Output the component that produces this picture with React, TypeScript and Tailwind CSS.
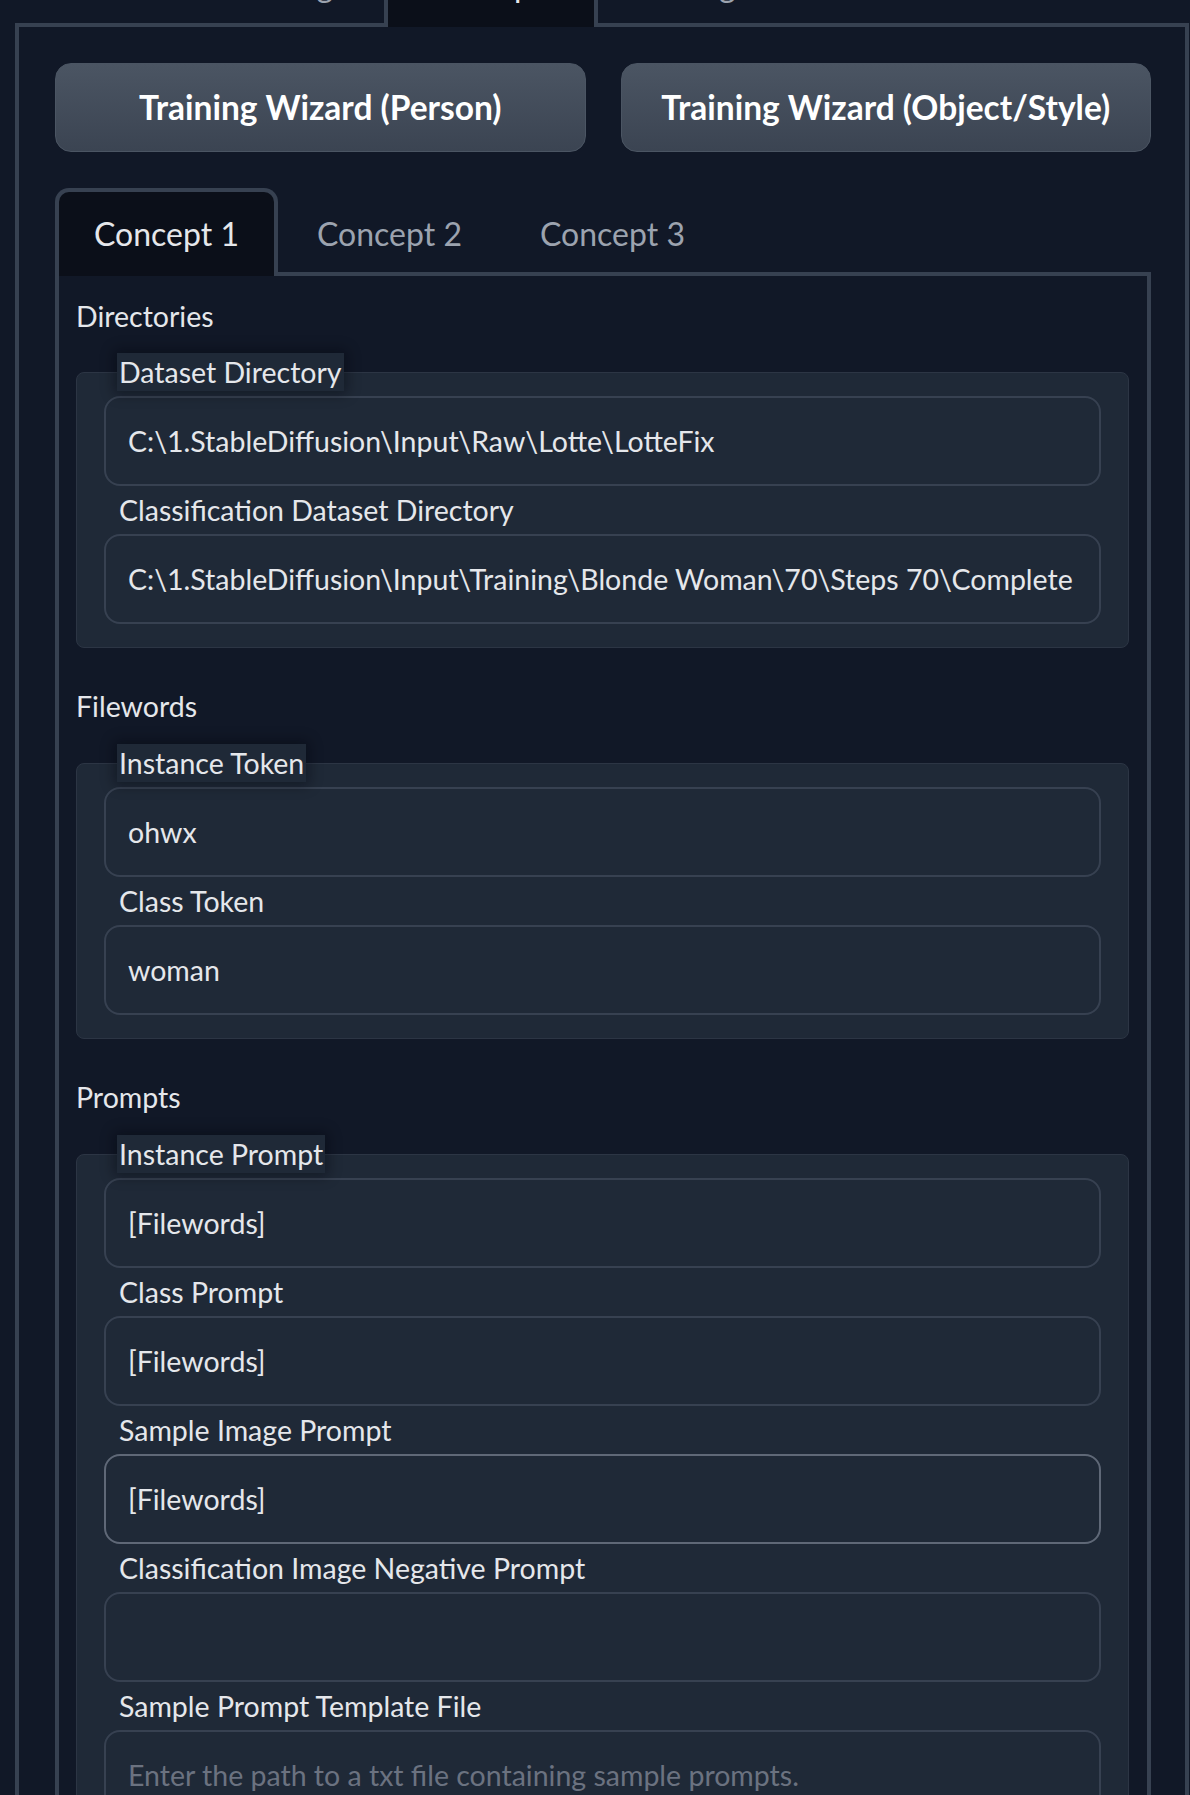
type FieldProps = {
  label: string
  value?: string
  placeholder?: string
  first?: boolean
  focused?: boolean
}

function Field({ label, value, placeholder, first, focused }: FieldProps) {
  return (
    <>
      <div className={`flex h-[48px] items-center ${first ? '-mt-[25px]' : ''}`}>
        <span
          className={`ml-[13px] h-[38px] bg-[#1f2937] px-[2px] leading-[38px] ${
            first ? 'shadow-[0_0_12px_3px_rgba(3,6,12,0.4)]' : ''
          }`}
        >
          {label}
        </span>
      </div>
      <div
        className={`flex h-[90px] items-center rounded-[16px] border-2 px-[22px] ${
          focused ? 'border-[#5f6877]' : 'border-[#374151]'
        }`}
      >
        {value ? (
          <span className="whitespace-nowrap">{value}</span>
        ) : (
          <span className="whitespace-nowrap text-[#6b7280]">{placeholder}</span>
        )}
      </div>
    </>
  )
}

function Section({ title, first, children }: { title: string; first?: boolean; children: React.ReactNode }) {
  return (
    <div className={first ? '' : 'mt-[38px]'}>
      <div className="h-[40px] leading-[40px]">{title}</div>
      <div
        className={`${first ? 'mt-[36px]' : 'mt-[37px]'} rounded-[8px] border border-[#2c3544] bg-[#1f2937] px-[27px] pb-[23px]`}
      >
        {children}
      </div>
    </div>
  )
}

const topTabs = [
  { name: 'Model', w: 'w-[183px]' },
  { name: 'Settings', w: 'w-[186px]' },
  { name: 'Concepts', w: 'w-[214px]', active: true },
  { name: 'Saving', w: 'w-[184px]' },
  { name: 'Generate', w: 'w-[200px]' },
]

const conceptTabs = ['Concept 1', 'Concept 2', 'Concept 3']

export default function App() {
  return (
    <div className="h-[1795px] overflow-hidden bg-[#111827] font-['Lato',sans-serif] text-[28.5px] text-[#e5e7eb]">
      <div className="ml-[15px] w-[1174px]">
        {/* top tab strip, mostly scrolled out of view */}
        <div className="-mt-[61px] flex border-b-4 border-[#374151]">
          {topTabs.map((t) => (
            <div
              key={t.name}
              className={`-mb-[4px] flex h-[88px] shrink-0 items-center justify-center rounded-t-[14px] border-x-4 border-t-4 text-[32px] ${t.w} ${
                t.active ? 'border-[#374151] bg-[#0b0f19] text-[#e5e7eb]' : 'border-transparent text-[#9ca3af]'
              }`}
            >
              {t.name}
            </div>
          ))}
        </div>

        <div className="border-x-4 border-b-4 border-[#374151] pb-[40px] pl-[36px] pr-[34px] pt-[36px]">
          <div className="grid grid-cols-2 gap-[35px]">
            <button className="h-[89px] rounded-[16px] border border-[#4b5563] bg-gradient-to-b from-[#4b5563] to-[#3b4452] text-[33.5px] font-bold text-white">
              Training Wizard (Person)
            </button>
            <button className="h-[89px] rounded-[16px] border border-[#4b5563] bg-gradient-to-b from-[#4b5563] to-[#3b4452] text-[33.5px] font-bold text-white">
              Training Wizard (Object/Style)
            </button>
          </div>

          <div className="mt-[36px] flex border-b-4 border-[#374151]">
            {conceptTabs.map((name, i) => (
              <div
                key={name}
                className={`-mb-[4px] flex h-[88px] w-[223px] items-center justify-center rounded-t-[14px] border-x-4 border-t-4 text-[32px] ${
                  i === 0 ? 'border-[#374151] bg-[#0b0f19] text-[#e5e7eb]' : 'border-transparent text-[#9ca3af]'
                }`}
              >
                {name}
              </div>
            ))}
          </div>

          <div className="border-x-4 border-b-4 border-[#374151] pb-[30px] pl-[17px] pr-[18px] pt-[20px]">
            <Section title="Directories" first>
              <Field first label="Dataset Directory" value="C:\1.StableDiffusion\Input\Raw\Lotte\LotteFix" />
              <Field
                label="Classification Dataset Directory"
                value="C:\1.StableDiffusion\Input\Training\Blonde Woman\70\Steps 70\Complete"
              />
            </Section>

            <Section title="Filewords">
              <Field first label="Instance Token" value="ohwx" />
              <Field label="Class Token" value="woman" />
            </Section>

            <Section title="Prompts">
              <Field first label="Instance Prompt" value="[Filewords]" />
              <Field label="Class Prompt" value="[Filewords]" />
              <Field label="Sample Image Prompt" value="[Filewords]" focused />
              <Field label="Classification Image Negative Prompt" />
              <Field
                label="Sample Prompt Template File"
                placeholder="Enter the path to a txt file containing sample prompts."
              />
            </Section>
          </div>
        </div>
      </div>
    </div>
  )
}
